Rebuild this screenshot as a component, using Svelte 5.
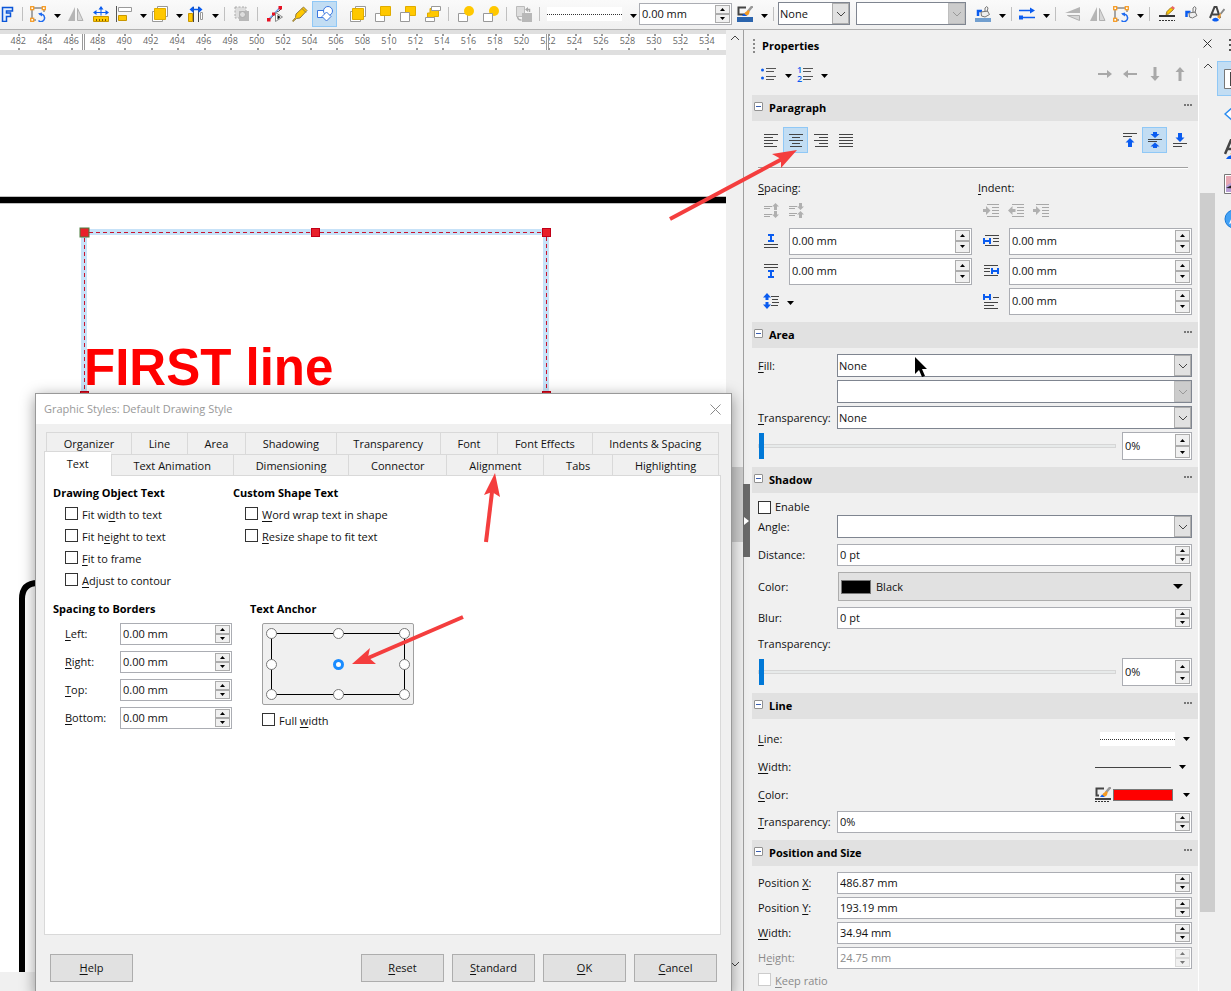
<script lang="ts">
  type Tool = { kind: 'btn' | 'split' | 'sep' | 'gap'; icon?: string; label?: string; active?: boolean };

  // 16x16 icon bodies
  const icons: Record<string, string> = {
    fontwork: '<path d="M3.500 15.500v-14h10v3.500h-6v2h4v3.500h-4v5z" fill="#e4effc" stroke="#0a55d8" stroke-width="1.500"/>',
    rotate: '<path d="M2 2h12M2 2v12M14 2v4M2 14h4" stroke="#555" fill="none"/><g fill="#fff" stroke="#f59a23" stroke-width="1.300"><rect x=".7" y=".7" width="3" height="3"/><rect x="12.300" y=".7" width="3" height="3"/><rect x=".7" y="12.300" width="3" height="3"/></g><path d="M8.500 14.500a3.500 3.500 0 0 0 6-3 3.500 3.500 0 0 0-5-3" fill="none" stroke="#1f6bf0" stroke-width="1.500"/><path d="M12 6.500v4L8 7.500z" fill="#1f6bf0"/>',
    flipH: '<path d="M7 1v14H0z" fill="#b5b5b5"/><path d="M9.500 2.500v12H15z" fill="#d8d8d8" stroke="#b0b0b0"/>',
    flipV: '<path d="M15 7V1L0 7z" fill="#b5b5b5"/><path d="M14.500 9.500v5L2.500 9.500z" fill="#d8d8d8" stroke="#b0b0b0"/>',
    measure: '<path d="M1 6.500h14M8 1v8.500" stroke="#0a5cf0"/><path d="M0 6.500l3.500-2.500v5zM16 6.500l-3.500-2.500v5zM8 0L5.500 3.500h5z" fill="#0a5cf0"/><path d="M.5 10.500h15v5H.5z" fill="#ffc800" stroke="#c89600"/><path d="M3.500 13v2M6.500 13v2M9.500 13v2M12.500 13v2" stroke="#7d5e00"/>',
    align: '<path d="M.5 0v16" stroke="#555"/><path d="M2.500 1.500h13v4h-13z" fill="#fff" stroke="#999"/><path d="M2.500 9.500h8v5h-8z" fill="#ffc800" stroke="#c89600"/>',
    front: '<path d="M5.500.500h10v10h-10zM.5 5.500h10v10H.5z" fill="#fff" stroke="#999"/><path d="M2.500 2.500h11v11h-11z" fill="#ffc800" stroke="#e0ac00"/>',
    forward: '<path d="M.5 7.500h9v8h-9z" fill="#fff" stroke="#999"/><path d="M5.500.500h10v9h-10z" fill="#ffc800" stroke="#e0ac00"/>',
    backward: '<path d="M5.500.500h10v9h-10z" fill="#ffc800" stroke="#e0ac00"/><path d="M.5 6.500h9v9h-9z" fill="#fff" stroke="#999"/>',
    back: '<path d="M5 2.500h8.500v8H9v2H2.500V7H5z" fill="#ffc800" stroke="#e0ac00"/><path d="M6.500.500h9v4h-9zM.5 11.500h9v4h-9z" fill="#fff" stroke="#999"/>',
    distribute: '<path d="M.5 7.500h4v8h-4z" fill="#ffc800" stroke="#c89600"/><path d="M5.500 1v15M10.500 1v15" stroke="#444"/><path d="M12.500 6.500h2v7h-2z" fill="#fff" stroke="#999"/><path d="M3 3.500h10" stroke="#0a5cf0" stroke-width="1.500"/><path d="M1.500 3.500L5.500 0v7zM14.500 3.500L10.500 0v7z" fill="#0a5cf0"/>',
    shadow: '<path d="M1 1h11v11H1z" fill="#ddd" stroke="#aaa" stroke-dasharray="2 1.500"/><path d="M5 5h10v10H5z" fill="#b8b8b8"/><circle cx="8.500" cy="8.500" r="3" fill="#ddd" stroke="#aaa"/>',
    points: '<path d="M3 13.500C5 10 7 10 8 7M9 6q3 0 5-3" stroke="#444" fill="none"/><path d="M1.500 13.500L12.500 2" stroke="#6fa5f5" stroke-width="1.300"/><path d="M0 12h3.500v3.500H0zM5 6.500h3v3H5zM11.500 0H15v3.500h-3.500z" fill="#e81123"/><path d="M8.500 6.500v9l7-4.500z" fill="#fff" stroke="#888"/><path d="M10.500 9v4.500l3-2.500z" fill="#111"/>',
    glue: '<path d="M11.500 1l3.500 3.500-7 7.500-3.500.500L1 15.500.500 15l3-3.500.5-3.500z" fill="#ffc800" stroke="#8f7a45"/><path d="M10 2.500l4 4" stroke="#8f7a45"/>',
    shapes: '<path d="M.5 4.500h7v7h-7z" fill="#fff" stroke="#3b77e0"/><circle cx="11" cy="5" r="4.500" fill="#fff" stroke="#3b77e0"/><path d="M9.500 6l4.500 4.500-4.500 4.500L5 10.500z" fill="#fff" stroke="#3b77e0"/>',
    infront: '<path d="M.5 7.500h9v8h-9z" fill="#fff" stroke="#999"/><circle cx="11" cy="5" r="5" fill="#ffc800"/>',
    behind: '<circle cx="11" cy="5" r="5" fill="#ffc800"/><path d="M.5 7.500h9v8h-9z" fill="#fff" stroke="#999"/>',
    reverse: '<path d="M.5.500h8v10h-8z" fill="#ddd" stroke="#bbb"/><path d="M6 7h10v9H6z" fill="#b8b8b8"/><path d="M10 3.500h3.500V6M1.500 11c1 3 2 3 4 3" stroke="#aaa" fill="none" stroke-width="1.500"/><path d="M9 3.500L12 1v5z" fill="#aaa"/>',
    lineColor: '<path d="M9 1.500H1.500v7H10" fill="none" stroke="#444" stroke-width="2"/><path d="M15.500 0l-5 6" stroke="#999" stroke-width="2.500"/><path d="M11.500 4L8 6.500 6.500 9.500h3c2 0 3-2 3-4z" fill="#f59a23"/><path d="M7 7.500l-2 2.500h5z" fill="#0a5cf0"/><path d="M0 11h16v5H0z" fill="#2b64ad"/>',
    lineBrush: '<path d="M9 1.500H1.500v7H4" fill="none" stroke="#444" stroke-width="2"/><path d="M15.500 0l-5 6" stroke="#999" stroke-width="2.500"/><path d="M11.500 4L8 6.500 6.500 9.500h3c2 0 3-2 3-4z" fill="#f59a23"/><path d="M7 7.500l-2 2.500h5z" fill="#0a5cf0"/><path d="M0 12h16" stroke="#444" stroke-width="2"/><path d="M0 14.500h15" stroke="#333" stroke-dasharray="2 1"/>',
    fillColor: '<path d="M3 10V5h4" fill="none" stroke="#0a5cf0" stroke-width="2.500"/><path d="M6 6l6.500-1 2 3.500-4.500 2.500-3.500-1z" fill="#eee" stroke="#777"/><path d="M10 6V2q2-3 3 0l-1 4" fill="none" stroke="#777"/><path d="M0 12h16v4H0z" fill="#729fcf"/>',
    fill: '<path d="M2.500 11V6h4" fill="none" stroke="#0a5cf0" stroke-width="2.500"/><path d="M5 7l6-1 2 3.500-4.500 2.500-3-1z" fill="#eee" stroke="#777"/><path d="M9 7V2q2-3 3 0l-1 5" fill="none" stroke="#777"/>',
    arrows: '<path d="M0 4.500h11M4 11.500h12" stroke="#0a5cf0" stroke-width="1.500"/><path d="M11 1.500l5 3-5 3zM0 9.500h4v4H0z" fill="#0a5cf0"/>',
    lineStyle: '<path d="M0 10h16" stroke="#333" stroke-width="2"/><path d="M0 14.500h16" stroke="#333" stroke-dasharray="2 1"/><path d="M7 8.500l1-3 4-4 2.500 2-5 4.500z" fill="#ffc800" stroke="#9c7a28"/><path d="M12 1.500L13.500 0 16 2l-1.500 1.500z" fill="#e66"/>',
    character: '<path d="M1 12L5.500 1h2L11 12M3 8.500h6" fill="none" stroke="#444" stroke-width="2"/><path d="M15.500 3l-4 5" stroke="#888" stroke-width="2"/><path d="M12 7l-4 4 3 2z" fill="#f59a23"/><path d="M3 14c2-3 5-3 7 0-2 2-5 2-7 0z" fill="#0a5cf0"/>',
    bullets: '<circle cx="1.500" cy="4" r="1.500" fill="#0a5cf0"/><circle cx="1.500" cy="12" r="1.500" fill="#0a5cf0"/><path d="M5 2.500h10M5 5.500h8M5 10.500h10M5 13.500h8" stroke="#555"/>',
    alignLeft: '<path d="M1 2.500h14M1 5.500h9M1 8.500h14M1 11.500h9M1 14.500h13" stroke="#444"/>',
    alignCenter: '<path d="M1 2.500h14M4 5.500h8M1 8.500h14M4 11.500h8M2 14.500h12" stroke="#444"/>',
    alignRight: '<path d="M1 2.500h14M6 5.500h9M1 8.500h14M6 11.500h9M2 14.500h13" stroke="#444"/>',
    justify: '<path d="M1 2.500h14M1 5.500h14M1 8.500h14M1 11.500h14M1 14.500h14" stroke="#444"/>',
    top: '<path d="M1 1.500h14M1 4.500h9" stroke="#444"/><path d="M8 6l4.500 4.500H10V15H6v-4.500H3.500z" fill="#0a5cf0"/>',
    middle: '<path d="M1 7.500h14M1 9.500h9" stroke="#444"/><path d="M6 0h4v2h2.500L8 6 3.500 2H6zM8 10.500l4.500 4H10V16H6v-1.500H3.500z" fill="#0a5cf0"/>',
    bottom: '<path d="M1 11.500h14M1 14.500h9" stroke="#444"/><path d="M8 10L3.500 5.500H6V1h4v4.500h2.500z" fill="#0a5cf0"/>',
    right: '<path d="M1 8h9" stroke="#a8a8a8" stroke-width="2"/><path d="M10 4L15 8l-5 4z" fill="#a8a8a8"/>',
    left: '<path d="M15 8H6" stroke="#a8a8a8" stroke-width="2"/><path d="M6 4L1 8l5 4z" fill="#a8a8a8"/>',
    down: '<path d="M8 1v9" stroke="#a8a8a8" stroke-width="3"/><path d="M3.500 10L8 15l4.500-5z" fill="#a8a8a8"/>',
    up: '<path d="M8 15V6" stroke="#a8a8a8" stroke-width="3"/><path d="M3.500 6L8 1l4.500 5z" fill="#a8a8a8"/>',
    spaceMore: '<path d="M1 4.500h8M1 6.500h6M1 12.500h8M1 14.500h6" stroke="#a8a8a8"/><path d="M12.500 1l3.500 3.500h-2V8h-3V4.500H9zM12.500 16L9 12.500h2V9h3v3.500h2z" fill="#b0b0b0"/>',
    spaceLess: '<path d="M1 4.500h8M1 6.500h6M1 11.500h8M1 13.500h6" stroke="#a8a8a8"/><path d="M12.500 8L9 4.500h2V1h3v3.500h2zM12.500 9l3.500 3.500h-2V16h-3v-3.500H9z" fill="#b0b0b0"/>',
    indentMore: '<path d="M4 2.500h12M9 5.500h7M9 8.500h7M9 11.500h7M4 14.500h12" stroke="#a8a8a8"/><path d="M0 7h3V4l4.500 4.500L3 13v-3H0z" fill="#b0b0b0"/>',
    indentLess: '<path d="M4 2.500h12M9 5.500h7M9 8.500h7M9 11.500h7M4 14.500h12" stroke="#a8a8a8"/><path d="M7.500 7h-3V4L0 8.500 4.500 13v-3h3z" fill="#b0b0b0"/>',
    hanging: '<path d="M3 2.500h13M9 5.500h7M9 8.500h7M9 11.500h7M9 14.500h7" stroke="#a8a8a8"/><path d="M0 7h3V4l4.500 4.500L3 13v-3H0z" fill="#b0b0b0"/>',
    above: '<path d="M5 2h6M5 8h6M8 2v6" stroke="#0a5cf0" stroke-width="2"/><path d="M1 11.500h14M1 14.500h14" stroke="#444"/>',
    below: '<path d="M5 8h6M5 14h6M8 8v6" stroke="#0a5cf0" stroke-width="2"/><path d="M1 1.500h14M1 4.500h14" stroke="#444"/>',
    before: '<path d="M1 5v6M7 5v6M1 8h6" stroke="#0a5cf0" stroke-width="2"/><path d="M2 2.500h14M10 5.500h6M10 8.500h6M2 12.500h14" stroke="#444"/>',
    after: '<path d="M9 5v6M15 5v6M9 8h6" stroke="#0a5cf0" stroke-width="2"/><path d="M1 2.500h14M1 5.500h6M1 8.500h6M1 12.500h14" stroke="#444"/>',
    firstLine: '<path d="M1 1v6M7 1v6M1 4h6" stroke="#0a5cf0" stroke-width="2"/><path d="M10 4.500h6M1 9.500h14M1 12.500h10M1 15.500h14" stroke="#444"/>',
    lineSpacing: '<path d="M4 0l4 4.500H5.500V7h-3V4.500H0zM4 16l4-4.500H5.500V9h-3v2.500H0z" fill="#0a5cf0"/><path d="M8 3.500h8M9 6.500h6M9 9.500h7M8 12.500h7" stroke="#444"/>'
  };

  const drawTools: Tool[] = [
    { kind: 'btn', icon: 'fontwork', label: 'Fontwork' },
    { kind: 'sep' },
    { kind: 'split', icon: 'rotate', label: 'Transformations' },
    { kind: 'btn', icon: 'flipH', label: 'Flip' },
    { kind: 'btn', icon: 'measure', label: 'Helplines' },
    { kind: 'split', icon: 'align', label: 'Align' },
    { kind: 'split', icon: 'front', label: 'Arrange' },
    { kind: 'split', icon: 'distribute', label: 'Distribute' },
    { kind: 'sep' },
    { kind: 'btn', icon: 'shadow', label: 'Shadow' },
    { kind: 'sep' },
    { kind: 'btn', icon: 'points', label: 'Edit points' },
    { kind: 'btn', icon: 'glue', label: 'Glue points' },
    { kind: 'btn', icon: 'shapes', label: 'Draw functions', active: true },
    { kind: 'gap' },
    { kind: 'btn', icon: 'front', label: 'Bring to front' },
    { kind: 'btn', icon: 'forward', label: 'Forward one' },
    { kind: 'btn', icon: 'backward', label: 'Back one' },
    { kind: 'btn', icon: 'back', label: 'Send to back' },
    { kind: 'sep' },
    { kind: 'btn', icon: 'infront', label: 'In front of object' },
    { kind: 'btn', icon: 'behind', label: 'Behind object' },
    { kind: 'sep' },
    { kind: 'btn', icon: 'reverse', label: 'Reverse' },
    { kind: 'sep' }
  ];

  const styleTools: Tool[] = [
    { kind: 'split', icon: 'fillColor', label: 'Fill color' },
    { kind: 'sep' },
    { kind: 'split', icon: 'arrows', label: 'Arrow style' },
    { kind: 'sep' },
    { kind: 'btn', icon: 'flipV', label: 'Flip vertically' },
    { kind: 'btn', icon: 'flipH', label: 'Flip horizontally' },
    { kind: 'split', icon: 'rotate', label: 'Rotate' },
    { kind: 'sep' },
    { kind: 'btn', icon: 'lineStyle', label: 'Line' },
    { kind: 'btn', icon: 'fill', label: 'Area' },
    { kind: 'btn', icon: 'character', label: 'Character' }
  ];

  const ruler = Array.from({ length: 27 }, (_, i) => 482 + i * 2);

  const tabsTop = ['Organizer', 'Line', 'Area', 'Shadowing', 'Transparency', 'Font', 'Font Effects', 'Indents & Spacing'];
  const tabsBottom = ['Text', 'Text Animation', 'Dimensioning', 'Connector', 'Alignment', 'Tabs', 'Highlighting'];
  let activeTab = $state('Text');

  // An underscore marks the access key of a label
  const objectText = ['Fit wi_dth to text', 'Fit h_eight to text', '_Fit to frame', '_Adjust to contour'];
  const shapeText = ['_Word wrap text in shape', '_Resize shape to fit text'];
  const borders = ['_Left:', '_Right:', '_Top:', '_Bottom:'];
  const anchors = ['top left', 'top', 'top right', 'left', 'center', 'right', 'bottom left', 'bottom', 'bottom right'];
  let anchor = $state('center');

  const position = [
    { label: 'Position _X:', value: '486.87 mm' },
    { label: 'Position _Y:', value: '193.19 mm' },
    { label: '_Width:', value: '34.94 mm' },
    { label: 'H_eight:', value: '24.75 mm', disabled: true }
  ];

  function splitKey(text: string) {
    const at = text.indexOf('_');
    if (at < 0) return [text, '', ''];
    return [text.slice(0, at), text[at + 1], text.slice(at + 2)];
  }
</script>

{#snippet key(text: string)}
  {@const parts = splitKey(text)}
  <span class="key">{parts[0]}<u>{parts[1]}</u>{parts[2]}</span>
{/snippet}

{#snippet icon(name: string)}
  <svg class="icon" width="16" height="16" viewBox="0 0 16 16" aria-hidden="true">{@html icons[name]}</svg>
{/snippet}

{#snippet caret()}
  <svg class="caret" width="7" height="4" viewBox="0 0 7 4" aria-hidden="true"><path d="M0 0h7L3.500 4z" /></svg>
{/snippet}

{#snippet chevron()}
  <svg width="10" height="6" viewBox="0 0 10 6" aria-hidden="true"><path d="M1 1l4 4 4-4" fill="none" stroke="currentColor" /></svg>
{/snippet}

{#snippet tool(t: Tool)}
  {#if t.kind === 'sep' || t.kind === 'gap'}
    <span class="sep" class:blank={t.kind === 'gap'}></span>
  {:else}
    <button class="tool" class:split={t.kind === 'split'} class:active={t.active} aria-label={t.label}>
      {@render icon(t.icon ?? '')}
      {#if t.kind === 'split'}{@render caret()}{/if}
    </button>
  {/if}
{/snippet}

{#snippet spin(id: string, value: string, label = '', disabled = false)}
  <div class="spin" class:disabled>
    <input {id} type="text" {value} {disabled} aria-label={label || undefined} />
    <div class="steps">
      <button aria-label="Increase" {disabled}><svg width="5" height="3" viewBox="0 0 5 3"><path d="M0 3h5L2.500 0z" /></svg></button>
      <button aria-label="Decrease" {disabled}><svg width="5" height="3" viewBox="0 0 5 3"><path d="M0 0h5L2.500 3z" /></svg></button>
    </div>
  </div>
{/snippet}

{#snippet combo(id: string, value: string, label = '', disabled = false)}
  <div class="combo" class:disabled>
    <select {id} {disabled} aria-label={label || undefined}><option>{value}</option></select>
    <span class="drop">{@render chevron()}</span>
  </div>
{/snippet}

{#snippet section(title: string)}
  <div class="section">
    <button class="fold" aria-label="Collapse {title}"></button>
    <h2>{title}</h2>
    <button class="more" aria-label="{title} options"><i></i><i></i><i></i></button>
  </div>
{/snippet}

{#snippet check(text: string, disabled = false)}
  <label class="check" class:disabled><input type="checkbox" {disabled} />{@render key(text)}</label>
{/snippet}

{#snippet slider(id: string)}
  <div class="slider">
    <input {id} type="range" value="0" aria-label="Transparency" />
    {@render spin(id + '-value', '0%', 'Transparency value')}
  </div>
{/snippet}

<div class="app">
  <header class="toolbar">
    {#each drawTools as t}{@render tool(t)}{/each}
    <button class="line-preview" aria-label="Line style"><span class="dots"></span>{@render caret()}</button>
    {@render spin('line-width', '0.00 mm', 'Line width')}
    {@render tool({ kind: 'split', icon: 'lineColor', label: 'Line color' })}
    <span class="sep"></span>
    {@render combo('area-style', 'None', 'Area style')}
    {@render combo('area-fill', '', 'Area fill', true)}
    {#each styleTools as t}{@render tool(t)}{/each}
  </header>

  <div class="body">
    <main class="workspace">
      <div class="sheet">
        <div class="ruler">
          {#each ruler as n}<span>{n}</span>{/each}
          <b class="mark start"></b>
          <b class="mark end"></b>
        </div>
        <svg class="drawing" aria-label="Drawing page">
          <path d="M0 145H2000" stroke="#c0c0c0" stroke-width="8" />
          <path d="M0 145H2000" stroke="#000" stroke-width="6" />
          <path d="M60 528H38Q22 528 22 544V930" fill="none" stroke="#000" stroke-width="6" />
          <path d="M84 348V177H546V348" fill="none" stroke="#c7e2f8" stroke-width="6" />
          <path d="M84.500 348V177.500H546.500V348" fill="none" stroke="#c8142d" stroke-dasharray="4 3" />
          <g fill="#e8202a" stroke="#c00018">
            <rect x="80" y="173" width="9" height="9" stroke="#4a7d3c" />
            <rect x="311.500" y="173.500" width="8" height="8" />
            <rect x="542.500" y="173.500" width="8" height="8" />
            <rect x="80.500" y="336.500" width="8" height="8" />
            <rect x="542.500" y="336.500" width="8" height="8" />
          </g>
          <text x="84" y="330">FIRST line</text>
        </svg>
        <div class="hscroll"></div>
      </div>
      <div class="vscroll">
        <span class="arrow up">{@render chevron()}</span>
        <span class="thumb"></span>
        <span class="arrow">{@render chevron()}</span>
      </div>
    </main>

    <aside class="sidebar">
      <button class="collapse" aria-label="Hide sidebar"><svg width="5" height="8" viewBox="0 0 5 8"><path d="M0 0v8l5-4z" fill="#fff" /></svg></button>
      <div class="deck">
        <div class="deck-title">
          <i class="grip"></i>
          <h1>Properties</h1>
          <button class="close" aria-label="Close sidebar"><svg width="9" height="9" viewBox="0 0 9 9"><path d="M.5.500l8 8M8.500.500l-8 8" stroke="#333" /></svg></button>
        </div>
        <div class="deck-body">
          <div class="panels">
            <div class="lists">
              <button class="tool split" aria-label="Bullets">{@render icon('bullets')}{@render caret()}</button>
              <button class="tool split" aria-label="Numbering">
                <span class="digits"><b>1</b><b>2</b></span>
                <svg class="icon" width="10" height="16" viewBox="0 0 10 16"><path d="M0 2.500h10M0 5.500h8M0 10.500h10M0 13.500h8" stroke="#555" /></svg>
                {@render caret()}
              </button>
              <span class="fill"></span>
              {#each ['right', 'left', 'down', 'up'] as name}
                <button class="tool" aria-label="Move {name}">{@render icon(name)}</button>
              {/each}
            </div>

            {@render section('Paragraph')}
            <div class="aligns">
              {#each ['alignLeft', 'alignCenter', 'alignRight', 'justify'] as name}
                <button class="tool" class:active={name === 'alignCenter'} aria-label={name}>{@render icon(name)}</button>
              {/each}
              <span class="fill"></span>
              {#each ['top', 'middle', 'bottom'] as name}
                <button class="tool" class:active={name === 'middle'} aria-label={name}>{@render icon(name)}</button>
              {/each}
            </div>
            <hr />
            <div class="metrics">
              <div class="metric-col">
                <p>{@render key('_Spacing:')}</p>
                <div class="minis">{@render icon('spaceMore')}{@render icon('spaceLess')}</div>
                <div class="metric">{@render icon('above')}{@render spin('above', '0.00 mm', 'Above paragraph')}</div>
                <div class="metric">{@render icon('below')}{@render spin('below', '0.00 mm', 'Below paragraph')}</div>
                <div class="metric"><button class="tool spacing" aria-label="Line spacing">{@render icon('lineSpacing')}{@render caret()}</button></div>
              </div>
              <div class="metric-col">
                <p>{@render key('_Indent:')}</p>
                <div class="minis">{@render icon('indentMore')}{@render icon('indentLess')}{@render icon('hanging')}</div>
                <div class="metric">{@render icon('before')}{@render spin('before', '0.00 mm', 'Before text')}</div>
                <div class="metric">{@render icon('after')}{@render spin('after', '0.00 mm', 'After text')}</div>
                <div class="metric">{@render icon('firstLine')}{@render spin('first', '0.00 mm', 'First line')}</div>
              </div>
            </div>

            {@render section('Area')}
            <div class="fields">
              <div class="field"><label for="fill">{@render key('_Fill:')}</label>{@render combo('fill', 'None')}</div>
              <div class="field"><span class="blank-label"></span>{@render combo('fill-attr', '', 'Fill attribute', true)}</div>
              <div class="field"><label for="transparency">{@render key('_Transparency:')}</label>{@render combo('transparency', 'None')}</div>
              {@render slider('area-slider')}
            </div>

            {@render section('Shadow')}
            <div class="fields shadow">
              {@render check('Enable')}
              <div class="field"><label for="angle">Angle:</label>{@render combo('angle', '')}</div>
              <div class="field"><label for="distance">Distance:</label>{@render spin('distance', '0 pt')}</div>
              <div class="field">
                <label for="shadow-color">Color:</label>
                <button id="shadow-color" class="color"><i></i>Black<svg width="10" height="5" viewBox="0 0 10 5"><path d="M0 0h10L5 5z" /></svg></button>
              </div>
              <div class="field"><label for="blur">Blur:</label>{@render spin('blur', '0 pt')}</div>
              <label class="slider-label" for="shadow-slider">Transparency:</label>
              {@render slider('shadow-slider')}
            </div>

            {@render section('Line')}
            <div class="fields line">
              <div class="field pick">
                <label for="line-dash">{@render key('_Line:')}</label>
                <button id="line-dash"><span class="dots"></span>{@render caret()}</button>
              </div>
              <div class="field pick">
                <label for="line-thick">{@render key('_Width:')}</label>
                <button id="line-thick" class="thick"><span class="rule"></span>{@render caret()}</button>
              </div>
              <div class="field pick">
                <label for="line-paint">{@render key('_Color:')}</label>
                <button id="line-paint">{@render icon('lineBrush')}<span class="swatch"></span>{@render caret()}</button>
              </div>
              <div class="field"><label for="line-trans">{@render key('_Transparency:')}</label>{@render spin('line-trans', '0%')}</div>
            </div>

            {@render section('Position and Size')}
            <div class="fields position">
              {#each position as p, i}
                <div class="field" class:disabled={p.disabled}>
                  <label for="pos-{i}">{@render key(p.label)}</label>{@render spin('pos-' + i, p.value, '', p.disabled)}
                </div>
              {/each}
              {@render check('_Keep ratio', true)}
            </div>
          </div>
          <div class="deck-scroll">
            <span class="arrow up">{@render chevron()}</span>
            <span class="thumb"></span>
          </div>
        </div>
      </div>
      <nav class="decks">
        <button class="menu" aria-label="Sidebar settings"><i></i><i></i><i></i></button>
        <button class="deck-tab on" aria-label="Properties"><svg width="20" height="20" viewBox="0 0 20 20"><path d="M.5.500h19v19H.5z" fill="#fff" stroke="#777" /><path d="M7 4v12h12V4z" fill="#fff" stroke="#444" stroke-width="2" /></svg></button>
        <button class="deck-tab" aria-label="Shapes"><svg width="20" height="20" viewBox="0 0 20 20"><path d="M1 10l8-7 8 7-8 7z" fill="#fff" stroke="#2a8cf0" stroke-width="1.500" /></svg></button>
        <button class="deck-tab" aria-label="Styles"><svg width="20" height="20" viewBox="0 0 20 20"><path d="M1 15L7 1h2l6 14M3 10h10" fill="none" stroke="#444" stroke-width="2.500" /><path d="M2 20q4-7 9 0z" fill="#0a5cf0" /><path d="M6 15l6-4v6z" fill="#f59a23" /></svg></button>
        <button class="deck-tab" aria-label="Gallery"><svg width="20" height="20" viewBox="0 0 20 20"><path d="M.5.500h19v19H.5z" fill="#fff" stroke="#777" /><path d="M2 2h16v16H2z" fill="#e7a7b4" /><path d="M2 12l6-4 10 6v4H2z" fill="#b9a0d6" /><path d="M2 14l6-3 8 4z" fill="#222" /></svg></button>
        <button class="deck-tab" aria-label="Navigator"><svg width="20" height="20" viewBox="0 0 20 20"><circle cx="10" cy="10" r="9" fill="#42a1f5" stroke="#1779d8" /><path d="M5 15l3-7 7-3-3 7z" fill="#fff" /></svg></button>
      </nav>
    </aside>
  </div>

  <div class="dialog" role="dialog" aria-label="Graphic Styles: Default Drawing Style">
    <div class="titlebar">
      <span>Graphic Styles: Default Drawing Style</span>
      <button aria-label="Close"><svg width="11" height="11" viewBox="0 0 11 11"><path d="M.5.500l10 10M10.500.500l-10 10" stroke="#8a8a8a" /></svg></button>
    </div>
    <div class="tabs">
      <div class="tab-row">
        {#each tabsTop as t}<button class:selected={activeTab === t} onclick={() => (activeTab = t)}>{t}</button>{/each}
      </div>
      <div class="tab-row">
        {#each tabsBottom as t}<button class:selected={activeTab === t} onclick={() => (activeTab = t)}>{t}</button>{/each}
      </div>
    </div>
    <div class="page">
      <div class="groups checks">
        <section>
          <h3>Drawing Object Text</h3>
          {#each objectText as t}{@render check(t)}{/each}
        </section>
        <section>
          <h3>Custom Shape Text</h3>
          {#each shapeText as t}{@render check(t)}{/each}
        </section>
      </div>
      <div class="groups">
        <section class="borders">
          <h3>Spacing to Borders</h3>
          {#each borders as b, i}
            <div class="border-row"><label for="border-{i}">{@render key(b)}</label>{@render spin('border-' + i, '0.00 mm')}</div>
          {/each}
        </section>
        <section>
          <h3>Text Anchor</h3>
          <div class="anchor">
            <div class="anchor-box"></div>
            {#each anchors as a}<input type="radio" name="anchor" value={a} bind:group={anchor} aria-label={a} />{/each}
          </div>
          {@render check('Full _width')}
        </section>
      </div>
    </div>
    <div class="actions">
      <button><span class="key"><u>H</u>elp</span></button>
      <span class="fill"></span>
      <button><span class="key"><u>R</u>eset</span></button>
      <button><span class="key"><u>S</u>tandard</span></button>
      <button><span class="key"><u>O</u>K</span></button>
      <button><span class="key"><u>C</u>ancel</span></button>
    </div>
  </div>

  <svg class="notes" aria-hidden="true">
    <g stroke="#f43e3e" stroke-width="4">
      <path d="M670 219L784 158" />
      <path d="M486 542L492 492" />
      <path d="M463 617L368 658" />
    </g>
    <g fill="#f43e3e">
      <path d="M797 150L772 154L781 159L781 168Z" />
      <path d="M495 473L484 495L492 492L500 497Z" />
      <path d="M352 664L370 648L368 657L376 664Z" />
    </g>
    <path d="M915 357v17l4-4 3 7 3-1-3-7h5z" fill="#000" />
  </svg>
</div>

<style>
  :global(body) {
    margin: 0;
  }

  .app {
    position: relative;
    display: flex;
    flex-direction: column;
    height: 100vh;
    overflow: hidden;
    background: #f0f0f0;
    color: #111;
    font: 11px/16px 'Open Sans', 'Noto Sans', sans-serif;
  }

  .app * {
    box-sizing: border-box;
  }

  button,
  input,
  select {
    font: inherit;
    color: inherit;
    margin: 0;
    padding: 0;
    border: 0;
    border-radius: 0;
    background: none;
  }

  h1,
  h2,
  h3,
  p {
    margin: 0;
    font-size: 11px;
    line-height: 16px;
  }

  h1,
  h2,
  h3 {
    font-weight: 700;
    color: #000;
  }

  .key {
    white-space: pre;
  }

  u {
    text-underline-offset: 2px;
  }

  .fill {
    flex: 1;
  }

  .icon,
  .caret {
    flex: none;
    display: block;
  }

  /* Toolbar */
  .toolbar {
    flex: none;
    display: flex;
    align-items: center;
    height: 30px;
    padding-bottom: 2px;
    margin-left: -6px;
    background: linear-gradient(#fafafa, #f0f0f0);
    border-bottom: 1px solid #b0b0b0;
  }

  .tool {
    flex: none;
    display: flex;
    align-items: center;
    justify-content: center;
    width: 25px;
    height: 26px;
    border: 1px solid transparent;
  }

  .tool.split {
    width: 36px;
    gap: 8px;
  }

  .tool.split .caret,
  .spacing .caret {
    margin-top: 4px;
  }

  .tool.active {
    background: #c2ddf3;
    border-color: #90c8f6;
  }

  .sep {
    flex: none;
    width: 1px;
    height: 14px;
    margin: 0 4px 0 3px;
    background: #c0c0c0;
  }

  .sep.blank {
    background: none;
  }

  .dots {
    width: 75px;
    height: 14px;
    background: linear-gradient(90deg, #333 1px, #fff 1px) 0 7px / 2px 1px repeat-x #fff;
  }

  .line-preview {
    flex: none;
    display: flex;
    align-items: center;
    gap: 8px;
    margin: 0 2px 0 3px;
  }

  .line-preview .caret {
    margin-top: 4px;
  }

  .toolbar .spin {
    flex: none;
    width: 93px;
    height: 22px;
    margin-right: 2px;
  }

  .toolbar .combo {
    flex: none;
    width: 72px;
    margin-right: 6px;
  }

  .toolbar .combo.disabled {
    width: 110px;
  }

  /* Field controls */
  .spin {
    flex: 1;
    min-width: 0;
    display: flex;
    height: 22px;
    padding: 1px;
    background: #fff;
    border: 1px solid #abadb3;
  }

  .spin input {
    flex: 1;
    width: 0;
    min-width: 0;
    padding-left: 1px;
  }

  .spin input:disabled {
    color: #8a8a8a;
  }

  .steps {
    flex: none;
    display: flex;
    flex-direction: column;
    width: 15px;
  }

  .steps button {
    flex: 1;
    display: flex;
    align-items: center;
    justify-content: center;
    background: #f0f0f0;
    border: 1px solid #acacac;
  }

  .disabled .steps button {
    border-color: #d9d9d9;
    fill: #777;
  }

  .combo {
    flex: 1;
    min-width: 0;
    display: flex;
    height: 23px;
    background: #fff;
    border: 1px solid #7f8590;
  }

  .combo select {
    flex: 1;
    min-width: 0;
    appearance: none;
    padding-left: 1px;
  }

  .drop {
    display: flex;
    align-items: center;
    justify-content: center;
    width: 17px;
    background: #e1e1e1;
    border: 1px solid #adadad;
    color: #444;
  }

  .combo.disabled .drop {
    background: #cccccc;
    border-color: #bfbfbf;
    color: #999;
  }

  .check {
    display: flex;
    align-items: center;
    gap: 4px;
    height: 22px;
  }

  .check input {
    appearance: none;
    flex: none;
    width: 13px;
    height: 13px;
    margin-bottom: 3px;
    background: #fff;
    border: 1px solid #333;
  }

  .check input:checked {
    background: #333;
  }

  .check.disabled {
    color: #8a8a8a;
  }

  .check.disabled input {
    border-color: #ccc;
  }

  /* Workspace */
  .body {
    flex: 1;
    min-height: 0;
    display: flex;
  }

  .workspace {
    flex: 1;
    min-width: 0;
    display: flex;
  }

  .sheet {
    flex: 1;
    min-width: 0;
    display: flex;
    flex-direction: column;
    background: #fff;
  }

  .ruler {
    position: relative;
    flex: none;
    display: flex;
    height: 25px;
    padding: 0 6px 0 5px;
    background: #fff;
    border-top: 4px solid #dfdfdf;
    border-bottom: 5px solid #dfdfdf;
    color: #666;
    font-size: 9px;
    line-height: 14px;
  }

  .ruler span {
    flex: 1;
    text-align: center;
    background:
      linear-gradient(#999, #999) 55% 0 / 2px 2px no-repeat,
      linear-gradient(#999, #999) 55% 100% / 2px 2px no-repeat;
  }

  .mark {
    position: absolute;
    top: 0;
    bottom: 0;
    width: 3px;
    border: solid #999;
    border-width: 0 1px;
    background: #fff;
  }

  .mark.start {
    left: 82px;
  }

  .mark.end {
    left: 546px;
  }

  .drawing {
    flex: 1;
    display: block;
    width: 100%;
    min-height: 0;
  }

  .drawing text {
    fill: #f00;
    font: bold 51px 'Liberation Sans', Arial, sans-serif;
  }

  .hscroll {
    flex: none;
    height: 19px;
    background: #f0f0f0;
  }

  .vscroll {
    flex: none;
    display: flex;
    flex-direction: column;
    align-items: center;
    width: 17px;
    padding-bottom: 19px;
    background: #f0f0f0;
  }

  .arrow {
    height: 17px;
    display: flex;
    align-items: center;
    color: #444;
  }

  .arrow.up {
    transform: rotate(180deg);
  }

  .vscroll .thumb {
    width: 100%;
    height: 75px;
    margin: 420px 0 auto;
    background: #cdcdcd;
  }

  /* Sidebar */
  .sidebar {
    position: relative;
    flex: none;
    display: flex;
    width: 488px;
    border-left: 1px solid #a0a0a0;
  }

  .collapse {
    position: absolute;
    left: -1px;
    top: 454px;
    display: flex;
    align-items: center;
    justify-content: center;
    width: 7px;
    height: 73px;
    background: #696969;
  }

  .deck {
    flex: 1;
    min-width: 0;
    display: flex;
    flex-direction: column;
  }

  .deck-title {
    flex: none;
    display: flex;
    align-items: center;
    gap: 7px;
    height: 28px;
    padding: 3px 4px 0 9px;
  }

  .deck-title h1 {
    flex: 1;
  }

  .grip {
    width: 2px;
    height: 14px;
    background: repeating-linear-gradient(#8a8a8a 0 2px, transparent 2px 4px);
  }

  .close {
    display: flex;
    padding: 0 0 4px;
  }

  .deck-body {
    flex: 1;
    min-height: 0;
    display: flex;
  }

  .panels {
    flex: 1;
    min-width: 0;
    padding-left: 8px;
    overflow: hidden;
  }

  .deck-scroll {
    flex: none;
    display: flex;
    flex-direction: column;
    align-items: center;
    width: 18px;
    border-left: 1px solid #fff;
  }

  .deck-scroll .thumb {
    width: 15px;
    flex: 1;
    margin: 118px 0 79px;
    background: #cdcdcd;
  }

  .lists,
  .aligns {
    display: flex;
    align-items: center;
    height: 37px;
    padding: 0 6px 5px;
  }

  .digits {
    display: flex;
    flex-direction: column;
    width: 6px;
    margin-right: -8px;
    color: #0a5cf0;
    font-size: 9px;
    line-height: 9px;
  }

  .digits b {
    font-weight: 600;
  }

  .aligns {
    height: 38px;
    padding-bottom: 0;
  }

  .section {
    display: flex;
    align-items: center;
    gap: 6px;
    height: 26px;
    padding: 0 6px 0 2px;
    background: #e1e1e1;
  }

  .section h2 {
    flex: 1;
  }

  .fold {
    width: 9px;
    height: 9px;
    margin-bottom: 3px;
    border: 1px solid #919191;
    border-radius: 1px;
    background: linear-gradient(#3b5fb0, #3b5fb0) center / 5px 1px no-repeat #fff;
  }

  .more {
    display: flex;
    gap: 1px;
    margin-bottom: 6px;
  }

  .more i {
    width: 2px;
    height: 2px;
    background: #777;
  }

  hr {
    height: 2px;
    margin: 8px 10px 11px 6px;
    border: 0;
    border-top: 1px solid #a0a0a0;
    border-bottom: 1px solid #fff;
  }

  .metrics {
    display: flex;
    gap: 6px;
    padding: 0 6px 6px;
  }

  .metric-col {
    flex: 1;
    min-width: 0;
  }

  .minis {
    display: flex;
    gap: 9px;
    height: 30px;
    padding: 6px 5px 0;
  }

  .metric {
    display: flex;
    align-items: center;
    gap: 10px;
    height: 30px;
    padding-left: 5px;
  }

  .metric .spin {
    height: 27px;
  }

  .spacing {
    width: 30px;
    gap: 8px;
    justify-content: flex-start;
    border: 0;
  }

  .fields {
    display: flex;
    flex-direction: column;
    gap: 3px;
    padding: 6px 6px 7px;
  }

  .field {
    display: flex;
    align-items: center;
  }

  .field > label,
  .blank-label {
    flex: none;
    width: 79px;
    white-space: nowrap;
  }

  .field.disabled {
    color: #8a8a8a;
  }

  .slider {
    display: flex;
    align-items: center;
    gap: 6px;
  }

  .slider input[type='range'] {
    appearance: none;
    flex: 1;
    min-width: 0;
    height: 26px;
  }

  .slider input[type='range']::-webkit-slider-runnable-track {
    height: 4px;
    background: #e7eaea;
    border: 1px solid #d6d6d6;
  }

  .slider input[type='range']::-webkit-slider-thumb {
    appearance: none;
    width: 5px;
    height: 26px;
    margin-top: -12px;
    background: #0078d7;
  }

  .slider .spin {
    flex: none;
    width: 70px;
    height: 28px;
  }

  .shadow {
    gap: 6px;
  }

  .shadow .check {
    height: 16px;
    margin-bottom: -6px;
  }

  .shadow .check input {
    margin: 0;
  }

  .color {
    flex: 1;
    display: flex;
    align-items: center;
    gap: 5px;
    height: 29px;
    margin: 0 1px;
    padding: 0 7px 0 2px;
    text-align: left;
    background: #e1e1e1;
    border: 1px solid #adadad;
  }

  .color i {
    width: 30px;
    height: 14px;
    background: #000;
    border: 1px solid #777;
  }

  .color svg {
    margin-left: auto;
  }

  .slider-label {
    height: 17px;
    line-height: 17px;
  }

  .line {
    gap: 0;
  }

  .line .field:last-child {
    padding-top: 2px;
  }

  .pick {
    height: 28px;
  }

  .field.pick > label {
    flex: 1;
  }

  .pick button {
    display: flex;
    align-items: center;
    gap: 8px;
    padding-right: 2px;
  }

  .pick .thick {
    padding-right: 6px;
  }

  .pick .icon {
    margin-right: -6px;
  }

  .rule {
    width: 76px;
    height: 1px;
    background: #444;
  }

  .swatch {
    width: 60px;
    height: 12px;
    margin-right: 2px;
    background: #f00;
    border: 1px solid #777;
  }

  .position {
    padding-bottom: 0;
  }

  .position .check {
    height: 18px;
  }

  .decks {
    flex: none;
    display: flex;
    flex-direction: column;
    width: 15px;
    overflow: hidden;
  }

  .menu {
    display: flex;
    flex-direction: column;
    align-items: flex-end;
    gap: 3px;
    height: 31px;
    padding-top: 9px;
  }

  .menu i {
    width: 2px;
    height: 2px;
    background: #555;
  }

  .deck-tab {
    flex: none;
    display: flex;
    align-items: center;
    width: 34px;
    height: 35px;
    margin-left: 1px;
    padding-left: 6px;
    border: 1px solid transparent;
  }

  .deck-tab.on {
    background: #c2ddf3;
    border-color: #90c8f6;
  }

  /* Style dialog */
  .dialog {
    position: absolute;
    left: 35px;
    top: 393px;
    width: 697px;
    padding-bottom: 12px;
    background: #f0f0f0;
    border: 1px solid #999;
    box-shadow: 0 3px 14px rgba(0, 0, 0, 0.4);
  }

  .titlebar {
    display: flex;
    align-items: center;
    justify-content: space-between;
    height: 30px;
    padding: 0 10px 0 8px;
    background: #fff;
    color: #999;
  }

  .titlebar button {
    display: flex;
  }

  .tabs {
    padding: 8px 12px 0 10px;
  }

  .tab-row {
    display: flex;
    height: 22px;
    border-right: 1px solid #d9d9d9;
  }

  .tab-row button {
    flex: 1 1 auto;
    border: solid #d9d9d9;
    border-width: 1px 0 0 1px;
  }

  .tab-row .selected {
    position: relative;
    z-index: 1;
    margin: -3px 0 0 -2px;
    background: #fff;
  }

  .page {
    min-height: 460px;
    margin: -1px 10px 0 8px;
    padding: 9px 8px;
    background: #fff;
    border: 1px solid #d9d9d9;
  }

  .groups {
    display: flex;
  }

  .checks section {
    width: 180px;
  }

  .checks h3 {
    margin-bottom: 3px;
  }

  .page .check {
    padding-left: 12px;
  }

  .checks {
    margin-bottom: 9px;
  }

  .borders {
    width: 179px;
    margin-right: 18px;
  }

  .borders h3 {
    margin-bottom: 3px;
  }

  .border-row {
    display: flex;
    align-items: center;
    height: 28px;
    padding-left: 12px;
  }

  .border-row label {
    width: 55px;
  }

  .anchor {
    position: relative;
    display: grid;
    grid-template-columns: repeat(3, 11px);
    justify-content: space-between;
    align-content: space-between;
    width: 152px;
    height: 82px;
    margin: 6px 0 5px 12px;
    padding: 4px 3px;
    background: #f0f0f0;
    border: 1px solid #a0a0a0;
    border-radius: 2px;
  }

  .anchor-box {
    position: absolute;
    inset: 9px 8px;
    border: 1px solid #000;
  }

  .anchor input {
    appearance: none;
    position: relative;
    width: 11px;
    height: 11px;
    background: #fff;
    border: 1px solid #777;
    border-radius: 50%;
  }

  .anchor input:checked {
    border: 3px solid #1a8cff;
  }

  .actions {
    display: flex;
    gap: 8px;
    padding: 19px 14px 0;
  }

  .actions button {
    width: 83px;
    height: 28px;
    background: #e1e1e1;
    border: 1px solid #adadad;
  }

  .notes {
    position: absolute;
    inset: 0;
    width: 100%;
    height: 100%;
    pointer-events: none;
  }
</style>
